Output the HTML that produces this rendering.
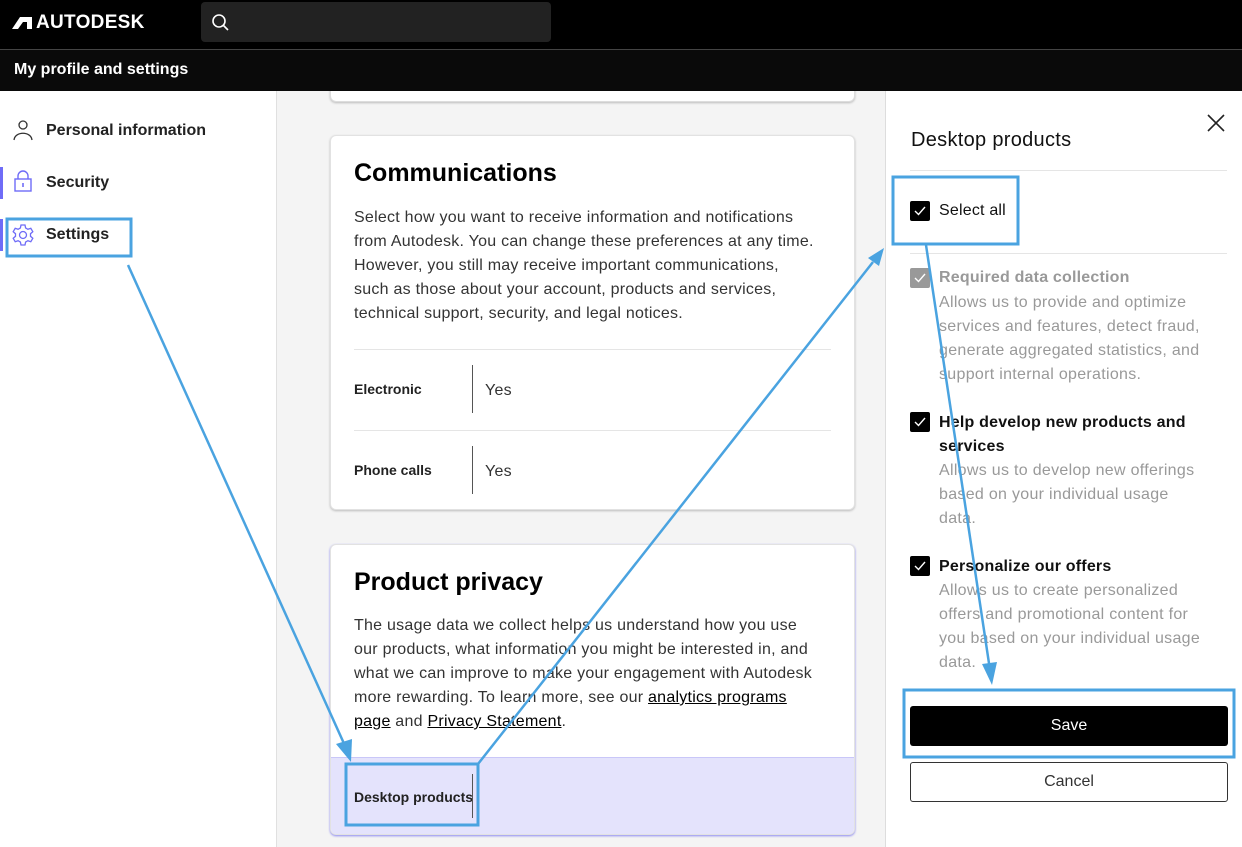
<!DOCTYPE html>
<html><head><meta charset="utf-8"><style>
*{margin:0;padding:0;box-sizing:border-box}
body{width:1242px;height:847px;overflow:hidden;position:relative;font-family:"Liberation Sans",sans-serif;color:#222;background:#f4f4f4}
.a{position:absolute}
.t{font-size:16px;line-height:24px;color:#333;letter-spacing:0.25px}
.cb{position:absolute;width:20px;height:20px;background:#000;border-radius:2px}
.cb svg{position:absolute;left:4px;top:5px}
.lbl{font-size:16px;font-weight:bold;color:#111;letter-spacing:0.2px}
.desc{font-size:16px;line-height:24px;color:#999;letter-spacing:0.3px}
</style></head><body>
<div class="a" style="left:330px;top:60px;width:525px;height:42px;background:#fff;border:1px solid #ddd;border-radius:6px;box-shadow:0 1px 2px #bbb"></div>
<div class="a" style="left:0;top:0;width:1242px;height:49px;background:#000"></div>
<div class="a" style="left:0;top:49px;width:1242px;height:1px;background:#444"></div>
<div class="a" style="left:0;top:50px;width:1242px;height:41px;background:#0a0a0a"></div>
<svg class="a" style="left:12px;top:15px" width="22" height="16"><path d="M0 14 L8 2 L20 2 L20 14 L15 14 L15 7 L11 7 L6 14Z" fill="#fff"/></svg>
<div class="a" style="left:36px;top:12px;color:#fff;font-weight:bold;font-size:19px;letter-spacing:0.3px">AUTODESK</div>
<div class="a" style="left:201px;top:2px;width:350px;height:40px;background:#222;border-radius:4px"></div>
<svg class="a" style="left:211px;top:13px" width="20" height="20"><circle cx="8" cy="8" r="6" fill="none" stroke="#fff" stroke-width="1.6"/><path d="M12.5 12.5L17 17" stroke="#fff" stroke-width="1.6"/></svg>
<div class="a" style="left:14px;top:61px;color:#fff;font-size:16px;font-weight:bold">My profile and settings</div>
<div class="a" style="left:0;top:91px;width:277px;height:756px;background:#fff;border-right:1px solid #e0e0e0"></div>
<svg class="a" style="left:12px;top:119px" width="22" height="22"><circle cx="11" cy="6" r="4" fill="none" stroke="#333" stroke-width="1.3"/><path d="M2 21 C3 12 19 12 20 21" fill="none" stroke="#333" stroke-width="1.3"/></svg>
<div class="a" style="left:46px;top:122px;font-size:16px;font-weight:bold;color:#222">Personal information</div>
<div class="a" style="left:0;top:167px;width:3px;height:32px;background:#6f6cf7"></div>
<svg class="a" style="left:13px;top:170px" width="20" height="22"><path d="M5 9V6a5 5 0 0 1 10 0v3" fill="none" stroke="#6f6cf7" stroke-width="1.4"/><rect x="2" y="9" width="16" height="12" fill="none" stroke="#6f6cf7" stroke-width="1.4"/><path d="M10 13v4" stroke="#6f6cf7" stroke-width="1.6"/></svg>
<div class="a" style="left:46px;top:174px;font-size:16px;font-weight:bold;color:#222">Security</div>
<div class="a" style="left:0;top:219px;width:3px;height:32px;background:#6f6cf7"></div>
<svg class="a" style="left:12px;top:224px" width="22" height="22" viewBox="0 0 22 22"><path d="M9 1h4l.6 3 2.3 1.3 2.9-1 2 3.4-2.3 2v2.6l2.3 2-2 3.4-2.9-1-2.3 1.3-.6 3H9l-.6-3-2.3-1.3-2.9 1-2-3.4 2.3-2V9.7L1.2 7.7l2-3.4 2.9 1L8.4 4z" fill="none" stroke="#6f6cf7" stroke-width="1.3"/><circle cx="11" cy="11" r="3.5" fill="none" stroke="#6f6cf7" stroke-width="1.3"/></svg>
<div class="a" style="left:46px;top:226px;font-size:16px;font-weight:bold;color:#222">Settings</div>
<div class="a" style="left:330px;top:135px;width:525px;height:375px;background:#fff;border:1px solid #e2e2e2;border-radius:6px;box-shadow:0 1px 2px #bbb"></div>
<div class="a" style="left:354px;top:159px;font-size:25px;font-weight:bold;color:#000">Communications</div>
<div class="a t" style="left:354px;top:206px;width:462px">Select how you want to receive information and notifications from Autodesk. You can change these preferences at any time. However, you still may receive important communications, such as those about your account, products and services, technical support, security, and legal notices.</div>
<div class="a" style="left:354px;top:349px;width:477px;height:1px;background:#e5e5e5"></div>
<div class="a" style="left:354px;top:381px;font-size:14px;font-weight:bold">Electronic</div>
<div class="a" style="left:472px;top:365px;width:1px;height:48px;background:#555"></div>
<div class="a t" style="left:485px;top:379px">Yes</div>
<div class="a" style="left:354px;top:430px;width:477px;height:1px;background:#e5e5e5"></div>
<div class="a" style="left:354px;top:462px;font-size:14px;font-weight:bold">Phone calls</div>
<div class="a" style="left:472px;top:446px;width:1px;height:48px;background:#555"></div>
<div class="a t" style="left:485px;top:460px">Yes</div>
<div class="a" style="left:330px;top:544px;width:525px;height:291px;background:#fff;border:1px solid #e2e2e2;border-radius:6px;box-shadow:0 1px 2px #8a87f0;overflow:hidden">
<div class="a" style="left:0;top:212px;width:525px;height:79px;background:#e4e3fc;border-top:1px solid #c9c7f8"></div></div>
<div class="a" style="left:354px;top:568px;font-size:25px;font-weight:bold;color:#000">Product privacy</div>
<div class="a t" style="left:354px;top:614px;width:466px">The usage data we collect helps us understand how you use our products, what information you might be interested in, and what we can improve to make your engagement with Autodesk more rewarding. To learn more, see our <u style="color:#000">analytics programs page</u> and <u style="color:#000">Privacy Statement</u>.</div>
<div class="a" style="left:354px;top:789px;font-size:14px;font-weight:bold;color:#222">Desktop products</div>
<div class="a" style="left:472px;top:774px;width:1px;height:44px;background:#555"></div>
<div class="a" style="left:885px;top:91px;width:357px;height:756px;background:#fff;border-left:1px solid #ddd"></div>
<div class="a" style="left:911px;top:129px;font-size:20px;color:#111;letter-spacing:0.3px">Desktop products</div>
<svg class="a" style="left:1207px;top:114px" width="18" height="18"><path d="M1 1L17 17M17 1L1 17" stroke="#222" stroke-width="1.6"/></svg>
<div class="a" style="left:910px;top:170px;width:317px;height:1px;background:#e5e5e5"></div>
<div class="cb" style="left:910px;top:201px"><svg width="12" height="10"><path d="M1 5l3.5 3.5L11 1" fill="none" stroke="#fff" stroke-width="1.4"/></svg></div>
<div class="a lbl" style="left:939px;top:202px;font-weight:normal">Select all</div>
<div class="a" style="left:910px;top:253px;width:317px;height:1px;background:#e5e5e5"></div>
<div class="cb" style="left:910px;top:268px;background:#999"><svg width="12" height="10"><path d="M1 5l3.5 3.5L11 1" fill="none" stroke="#fff" stroke-width="1.4"/></svg></div>
<div class="a lbl" style="left:939px;top:269px;color:#999">Required data collection</div>
<div class="a desc" style="left:939px;top:291px;width:275px">Allows us to provide and optimize services and features, detect fraud, generate aggregated statistics, and support internal operations.</div>
<div class="cb" style="left:910px;top:412px"><svg width="12" height="10"><path d="M1 5l3.5 3.5L11 1" fill="none" stroke="#fff" stroke-width="1.4"/></svg></div>
<div class="a lbl" style="left:939px;top:411px;width:280px;line-height:24px">Help develop new products and services</div>
<div class="a desc" style="left:939px;top:459px;width:262px">Allows us to develop new offerings based on your individual usage data.</div>
<div class="cb" style="left:910px;top:556px"><svg width="12" height="10"><path d="M1 5l3.5 3.5L11 1" fill="none" stroke="#fff" stroke-width="1.4"/></svg></div>
<div class="a lbl" style="left:939px;top:555px;line-height:24px">Personalize our offers</div>
<div class="a desc" style="left:939px;top:579px;width:272px">Allows us to create personalized offers and promotional content for you based on your individual usage data.</div>
<div class="a" style="left:910px;top:706px;width:318px;height:40px;background:#000;border-radius:3px;color:#fff;font-size:16px;text-align:center;line-height:40px">Save</div>
<div class="a" style="left:910px;top:762px;width:318px;height:40px;background:#fff;border:1px solid #333;border-radius:3px;color:#333;font-size:16px;text-align:center;line-height:38px">Cancel</div>
<svg class="a" style="left:0;top:0" width="1242" height="847">
<g fill="none" stroke="#4aa3e0" stroke-width="3">
<rect x="7" y="219" width="124" height="37"/>
<rect x="346" y="764" width="132" height="61"/>
<rect x="893" y="177" width="125" height="67"/>
<rect x="904" y="690" width="330" height="67"/>
</g>
<g stroke="#4aa3e0" stroke-width="2.5">
<line x1="128" y1="265" x2="346" y2="748"/>
<line x1="478" y1="764" x2="873" y2="262"/>
<line x1="926" y1="245" x2="990" y2="670"/>
</g>
<g fill="#4aa3e0">
<path d="M351 762 L336 744 L352 739Z"/>
<path d="M884 248 L868 258 L879 266Z"/>
<path d="M992 685 L982 664 L997 662Z"/>
</g>
</svg>
</body></html>
